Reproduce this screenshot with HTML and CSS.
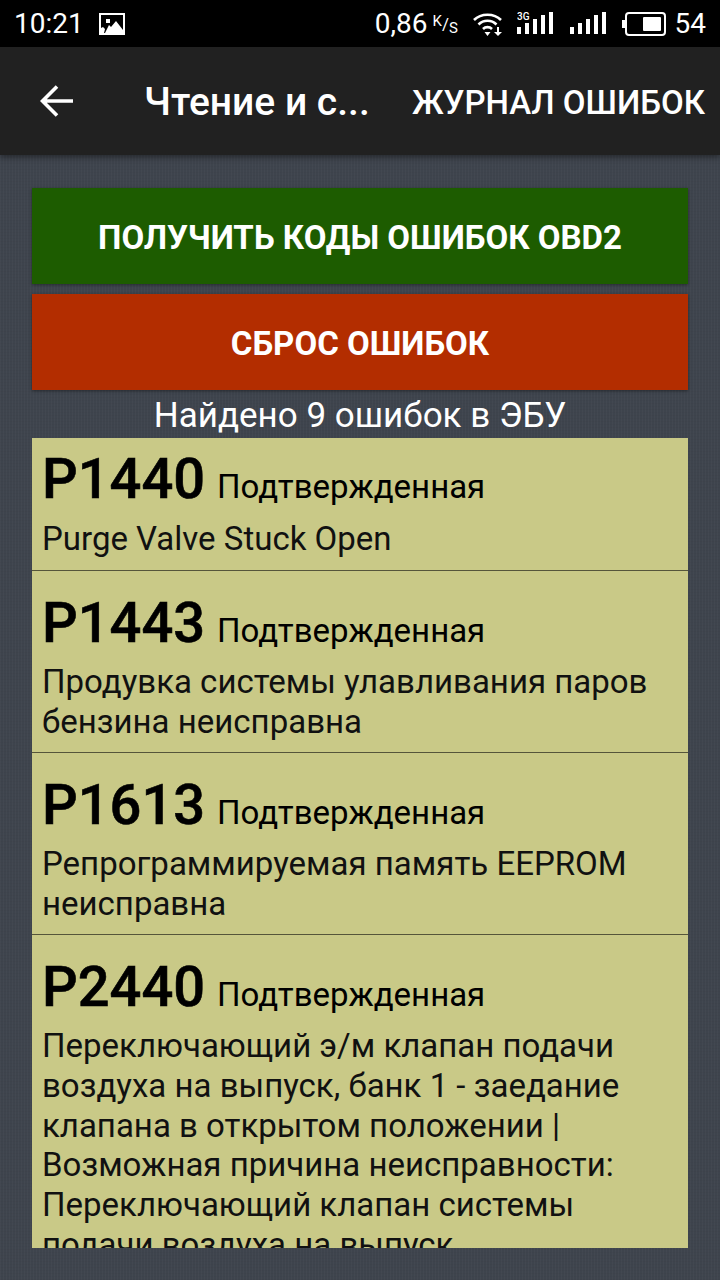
FILE: index.html
```html
<!DOCTYPE html>
<html lang="ru">
<head>
<meta charset="utf-8">
<title>Чтение и сброс</title>
<link rel="stylesheet" href="styles.css">
</head>
<body>
<div class="status">
  <div class="status-left">
    <span class="time">10:21</span>
    <svg class="ic-pic" width="26" height="22" viewBox="0 0 26 22"><path fill="#fff" fill-rule="evenodd" d="M0 0H26V22H0ZM2 2V15L4 14 6 16 5 20H24V2Z"/><path fill="#fff" d="M8 20H24V17L17 8 12 14 10 12 6 20Z"/><rect x="7" y="6" width="4" height="4" fill="#fff"/></svg>
  </div>
  <div class="status-right">
    <span class="time">0,86</span>
    <span class="speed"><sup>K</sup>/<sub>S</sub></span>
    <svg class="ic-wifi" width="30" height="24" viewBox="0 0 30 24"><g fill="none" stroke="#fff" stroke-width="2.6"><path d="M1 8C8 1 21 1 28 8"/><path d="M5.500 12.500C10.500 7.500 18.500 7.500 23.500 12.500"/><path d="M10 17C12.500 14.500 16.500 14.500 19 17"/></g><path fill="#fff" d="M11.500 20H17.500L14.500 24ZM24 15H26V20H29L25 24 21 20H24Z"/></svg>
    <svg class="ic-sig" width="37" height="23" viewBox="0 0 37 23"><text class="g3" x="0" y="8">3G</text><rect x="0" y="15" width="4" height="7" fill="#fff"/><rect x="8" y="11" width="4" height="11" fill="#fff"/><rect x="16" y="7" width="4" height="15" fill="#fff"/><rect x="24" y="3" width="4" height="19" fill="#fff"/><rect x="32" y="0" width="4" height="22" fill="#fff"/></svg>
    <svg class="ic-sig2" width="37" height="23" viewBox="0 0 37 23"><rect x="0" y="15" width="4" height="7" fill="#fff"/><rect x="8" y="11" width="4" height="11" fill="#fff"/><rect x="16" y="7" width="4" height="15" fill="#fff"/><rect x="24" y="3" width="4" height="19" fill="#fff"/><rect x="32" y="0" width="4" height="22" fill="#fff"/></svg>
    <svg class="ic-bat" width="44" height="24" viewBox="0 0 44 24"><rect x="0" y="8" width="3" height="8" fill="#fff"/><rect x="4" y="1" width="39" height="22" rx="3" fill="none" stroke="#fff" stroke-width="2"/><rect x="21" y="5" width="18" height="14" rx="1" fill="#fff"/></svg>
    <span class="time">54</span>
  </div>
</div>
<header class="bar">
  <svg class="back" width="34" height="32" viewBox="0 0 34 32"><path fill="none" stroke="#fff" stroke-width="3.600" d="M33 16H3M17 1.500 2.500 16 17 30.500"/></svg>
  <h1 class="title">Чтение и с...</h1>
  <span class="action">ЖУРНАЛ ОШИБОК</span>
</header>
<main class="content">
  <div class="btn green">ПОЛУЧИТЬ КОДЫ ОШИБОК OBD2</div>
  <div class="btn red">СБРОС ОШИБОК</div>
  <p class="found">Найдено 9 ошибок в ЭБУ</p>
  <div class="list">
    <div class="item">
      <div class="head"><span class="code">P1440</span><span class="state">Подтвержденная</span></div>
      <div class="desc">Purge Valve Stuck Open</div>
    </div>
    <div class="item">
      <div class="head"><span class="code">P1443</span><span class="state">Подтвержденная</span></div>
      <div class="desc">Продувка системы улавливания паров бензина неисправна</div>
    </div>
    <div class="item">
      <div class="head"><span class="code">P1613</span><span class="state">Подтвержденная</span></div>
      <div class="desc">Репрограммируемая память EEPROM неисправна</div>
    </div>
    <div class="item">
      <div class="head"><span class="code">P2440</span><span class="state">Подтвержденная</span></div>
      <div class="desc">Переключающий э/м клапан подачи воздуха на выпуск, банк 1 - заедание клапана в открытом положении | Возможная причина неисправности: Переключающий клапан системы подачи воздуха на выпуск</div>
    </div>
  </div>
</main>
</body>
</html>
```
FILE: styles.css
```css
* { box-sizing: border-box; }
html, body { margin: 0; height: 1280px; overflow: hidden; }
body {
  font-family: Roboto, "Noto Sans", sans-serif;
  display: flex;
  flex-direction: column;
  background-color: #3e444d;
  background-image:
    repeating-linear-gradient(90deg, rgba(255,255,255,.025) 0 1px, transparent 1px 3px),
    repeating-linear-gradient(0deg, rgba(0,0,0,.025) 0 1px, transparent 1px 3px);
}
.status {
  height: 47px;
  flex: none;
  background: #000;
  color: #fff;
  display: flex;
  justify-content: space-between;
  align-items: center;
  padding: 0 14px 0 14px;
}
.status-left, .status-right { display: flex; align-items: center; }
.time { font-size: 28px; line-height: 47px; }
.ic-pic { margin-left: 15px; }
.speed { font-size: 17px; width: 27px; margin-left: 5px; line-height: 20px; display: flex; }
.speed sup { position: relative; top: -3px; font-size: 15px; line-height: 20px; }
.speed sub { position: relative; top: 4px; font-size: 15px; line-height: 20px; }
.ic-wifi { margin-left: 13px; }
.ic-sig { margin-left: 14px; }
.ic-sig2 { margin-left: 16px; }
.ic-bat { margin-left: 15px; }
.status-right .time:last-child { margin-left: 9px; }
.g3 { font: 500 10px Roboto, sans-serif; fill: #fff; }
.bar {
  height: 108px;
  flex: none;
  background: #212121;
  color: #fff;
  display: flex;
  align-items: center;
  padding: 0 15px 0 40px;
  box-shadow: 0 2px 6px rgba(0,0,0,.45);
  position: relative;
}
.back { flex: none; }
.title { margin: 2px 0 0 70px; font-size: 39px; font-weight: 500; white-space: nowrap; }
.action { margin: 2px 0 0 auto; font-size: 33px; font-weight: 500; white-space: nowrap; }
.content {
  flex: none;
  height: 1093px;
  padding: 33px 32px 0;
  display: flex;
  flex-direction: column;
  min-height: 0;
}
.btn {
  height: 96px;
  flex: none;
  display: flex;
  align-items: center;
  justify-content: center;
  color: #fff;
  font-size: 33px;
  font-weight: 700;
  padding-top: 2px;
  box-shadow: 0 1px 3px rgba(0,0,0,.4);
}
.green { background: #1d5c00; }
.red { background: #b32d00; margin-top: 10px; }
.found {
  margin: 0;
  height: 48px;
  flex: none;
  color: #fff;
  font-size: 35px;
  line-height: 52px;
  text-align: center;
}
.list {
  height: 810px;
  flex: none;
  background: #c9c987;
  overflow: hidden;
  color: #000;
}
.item { padding: 9px 10px 0; border-bottom: 1px solid #55553a; }
.item:nth-child(1) { height: 133px; }
.item:nth-child(1) .head { height: 72px; }
.item:nth-child(n+2) { padding-top: 20px; }
.item:nth-child(2), .item:nth-child(3) { height: 182px; }
.head { display: flex; align-items: baseline; height: 71px; }
.code { font-size: 56px; font-weight: 500; line-height: 64px; -webkit-text-stroke: .6px #000; }
.state { font-size: 33px; margin-left: 12px; }
.desc { font-size: 33px; line-height: 39.8px; color: #111; }
```
